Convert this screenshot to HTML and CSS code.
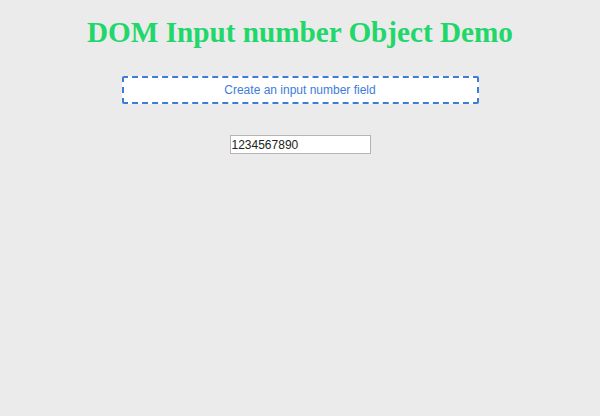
FILE: index.html
```html
<!DOCTYPE html>
<html>
<head>
<meta charset="utf-8">
<link rel="stylesheet" href="styles.css">
</head>
<body>
<div class="page">
  <h1 class="title">DOM Input number Object Demo</h1>
  <button class="create-btn">Create an input number field</button>
  <input class="num-input" type="number" value="1234567890">
</div>
</body>
</html>
```
FILE: styles.css
```css
html, body {
  margin: 0;
  padding: 0;
  background: #ebebeb;
}
.page {
  display: flex;
  flex-direction: column;
  align-items: center;
  padding-top: 14px;
}
.title {
  margin: 0;
  font-family: "Liberation Serif", serif;
  font-weight: bold;
  font-size: 29.2px;
  line-height: 36px;
  color: #22d76a;
}
.create-btn {
  margin-top: 26px;
  width: 357px;
  height: 28px;
  background: #fff;
  border: 2px dashed #3d7dd8;
  border-radius: 2px;
  color: #3d7dd8;
  font-family: "Liberation Sans", Arial, sans-serif;
  font-size: 12px;
  padding: 0;
}
.num-input {
  margin-top: 31px;
  width: 141px;
  height: 19px;
  box-sizing: border-box;
  border: 1px solid #b5b5b5;
  background: #fff;
  font-family: "Liberation Sans", Arial, sans-serif;
  font-size: 12px;
  color: #222;
  padding: 0 1px;
  -moz-appearance: textfield;
}
.num-input::-webkit-inner-spin-button,
.num-input::-webkit-outer-spin-button {
  -webkit-appearance: none;
  margin: 0;
}
```
